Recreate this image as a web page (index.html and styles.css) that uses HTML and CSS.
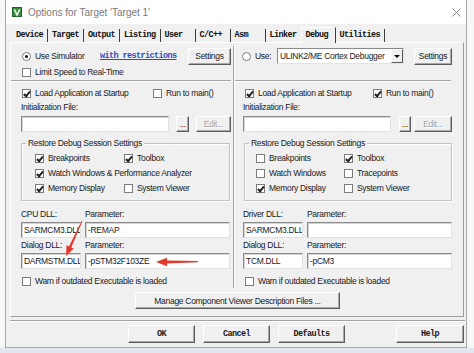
FILE: index.html
```html
<!DOCTYPE html>
<html>
<head>
<meta charset="utf-8">
<title>Options for Target 'Target 1'</title>
<link rel="stylesheet" href="styles.css">
</head>
<body>
<div class="window">
  <div class="titlebar">
    <svg class="appicon" viewBox="0 0 10 10"><rect x="0.5" y="0.5" width="9" height="9" fill="#3a8f3f" stroke="#1f6326"/><polyline points="2.3,2.4 5,8 7.7,2.4" fill="none" stroke="#e8f3e8" stroke-width="1.6"/></svg>
    <span class="title">Options for Target 'Target 1'</span>
    <svg class="close" viewBox="0 0 9 9"><path d="M0.5 0.5 L8.5 8.5 M8.5 0.5 L0.5 8.5" stroke="#8a8a8a" stroke-width="1" fill="none"/></svg>
  </div>

  <div class="tabs">
    <span class="tab">Device</span>
    <span class="tab">Target</span>
    <span class="tab">Output</span>
    <span class="tab">Listing</span>
    <span class="tab">User</span>
    <span class="tab">C/C++</span>
    <span class="tab">Asm</span>
    <span class="tab pre">Linker</span>
    <span class="tab sel">Debug</span>
    <span class="tab">Utilities</span>
  </div>

  <div class="panel">
    <div class="cols">
      <div class="col l">
        <div class="row top">
          <span class="chk w-sim"><span class="radio on"></span>Use Simulator</span>
          <span class="link">with restrictions</span>
          <span class="btn settings">Settings</span>
        </div>
        <div class="row"><span class="chk"><span class="box"></span>Limit Speed to Real-Time</span></div>
        <div class="sep"></div>
        <div class="row mt4">
          <span class="chk w-run"><span class="box on"></span>Load Application at Startup</span>
          <span class="chk"><span class="box"></span>Run to main()</span>
        </div>
        <div class="row">Initialization File:</div>
        <div class="fields init">
          <span class="inp initf"></span>
          <span class="btn dots">...</span>
          <span class="btn edit dis">Edit...</span>
        </div>
        <div class="grp">
          <div class="legend">Restore Debug Session Settings</div>
          <div class="grow first"><span class="chk gw"><span class="box on"></span>Breakpoints</span><span class="chk"><span class="box on"></span>Toolbox</span></div>
          <div class="grow"><span class="chk"><span class="box on"></span>Watch Windows &amp; Performance Analyzer</span></div>
          <div class="grow"><span class="chk gw"><span class="box on"></span>Memory Display</span><span class="chk"><span class="box"></span>System Viewer</span></div>
        </div>
        <div class="row lblrow"><span class="dlbl">CPU DLL:</span><span>Parameter:</span></div>
        <div class="fields dll1"><span class="inp dllf">SARMCM3.DLL</span><span class="inp parf">-REMAP</span></div>
        <div class="row lblrow2"><span class="dlbl">Dialog DLL:</span><span>Parameter:</span></div>
        <div class="fields dll2"><span class="inp dllf">DARMSTM.DLL</span><span class="inp parf">-pSTM32F103ZE</span></div>
        <div class="row warn"><span class="chk"><span class="box"></span>Warn if outdated Executable is loaded</span></div>
      </div>

      <div class="divider"></div>

      <div class="col r">
        <div class="row top">
          <span class="chk w-use"><span class="radio"></span>Use:</span>
          <span class="select"><span class="seltext">ULINK2/ME Cortex Debugger</span><span class="dd"><span class="tri"></span></span></span>
          <span class="btn settings">Settings</span>
        </div>
        <div class="row"></div>
        <div class="sep"></div>
        <div class="row mt4">
          <span class="chk w-run"><span class="box on"></span>Load Application at Startup</span>
          <span class="chk"><span class="box on"></span>Run to main()</span>
        </div>
        <div class="row">Initialization File:</div>
        <div class="fields init">
          <span class="inp initf"></span>
          <span class="btn dots">...</span>
          <span class="btn edit dis">Edit...</span>
        </div>
        <div class="grp">
          <div class="legend">Restore Debug Session Settings</div>
          <div class="grow first"><span class="chk gw"><span class="box"></span>Breakpoints</span><span class="chk"><span class="box on"></span>Toolbox</span></div>
          <div class="grow"><span class="chk gw"><span class="box"></span>Watch Windows</span><span class="chk"><span class="box"></span>Tracepoints</span></div>
          <div class="grow"><span class="chk gw"><span class="box on"></span>Memory Display</span><span class="chk"><span class="box"></span>System Viewer</span></div>
        </div>
        <div class="row lblrow"><span class="dlbl">Driver DLL:</span><span>Parameter:</span></div>
        <div class="fields dll1"><span class="inp dllf">SARMCM3.DLL</span><span class="inp parf"></span></div>
        <div class="row lblrow2"><span class="dlbl">Dialog DLL:</span><span>Parameter:</span></div>
        <div class="fields dll2"><span class="inp dllf">TCM.DLL</span><span class="inp parf">-pCM3</span></div>
        <div class="row warn"><span class="chk"><span class="box"></span>Warn if outdated Executable is loaded</span></div>
      </div>
    </div>
    <div class="managerow"><span class="btn manage">Manage Component Viewer Description Files ...</span></div>
  </div>

  <div class="footsep"></div>
  <div class="buttons">
    <span class="btn fbtn">OK</span>
    <span class="btn fbtn">Cancel</span>
    <span class="btn fbtn">Defaults</span>
    <span class="btn fbtn help">Help</span>
  </div>
</div>
<div class="below"></div>

<svg class="arrows" viewBox="0 0 474 353">
  <polygon points="82.4,221.2 71.3,247.4 73.8,248.6 66,256 66.5,245.2 69,246.4 81.6,220.8" fill="#e5382c"/>
  <polygon points="156,262 167,257.8 167,260.4 198,261 198,262.2 167,263.6 167,266.2" fill="#e5382c"/>
</svg>
</body>
</html>
```

FILE: styles.css
```css
* { box-sizing: border-box; }
html, body { margin: 0; padding: 0; }
body {
  width: 474px;
  height: 353px;
  overflow: hidden;
  position: relative;
  background: #f7f7f7;
  font-family: "Liberation Sans", Arial, sans-serif;
  font-size: 8.5px;
  letter-spacing: -0.3px;
  color: #1a1a1a;
}

.window {
  margin-left: 5px;
  width: 462px;
  background: #f0f0f0;
  border: 1px solid #a9a9a9;
  border-top: none;
  padding-bottom: 4px;
}

/* title bar */
.titlebar {
  height: 24px;
  background: #fff;
  display: flex;
  align-items: center;
  padding-left: 6px;
}
.appicon { width: 10px; height: 10px; flex: none; }
.title { margin-left: 6px; font-size: 10px; letter-spacing: 0; color: #7a7a7a; }
.close { margin-left: auto; margin-right: 5px; width: 9px; height: 9px; }

/* tabs */
.tabs {
  display: flex;
  align-items: flex-end;
  height: 18px;
  padding-left: 6px;
}
.tab {
  height: 13px;
  min-width: 35px;
  padding: 0 4px;
  border-right: 1px solid #3c3c3c;
  font: bold 8.5px/13px "Liberation Mono", monospace;
  letter-spacing: -0.6px;
  color: #111;
  white-space: nowrap;
}
.tab.pre { border-right-color: transparent; }
.tab.sel {
  height: 16px;
  line-height: 15px;
  background: #f0f0f0;
  border-left: 1px solid #fff;
  border-top: 1px solid #fff;
  margin-left: -1px;
  margin-bottom: -1px;
  position: relative;
  z-index: 1;
}

/* panel */
.panel {
  margin-left: 4px;
  width: 454px;
  border: 1px solid;
  border-color: #fff #9c9c9c #9c9c9c #fff;
  padding-bottom: 7px;
}
.cols {
  display: grid;
  grid-template-columns: 222px 2px 228px;
  height: 245px;
}
.divider {
  border-left: 1px solid #a3a3a3;
  border-right: 1px solid #fff;
  margin-top: 3px;
}
.col { display: flex; flex-direction: column; }
.col.l { padding: 0 2px 0 10px; }
.col.r { padding: 0 11px 0 8px; }

.row {
  display: flex;
  align-items: center;
  height: 14px;
  flex: none;
  white-space: nowrap;
}
.row.top { margin-top: 4px; height: 18px; }
.row.mt4 { margin-top: 4px; }
.sep {
  flex: none;
  margin-top: 1px;
  border-top: 1px solid #a3a3a3;
  border-bottom: 1px solid #fff;
}
.l .sep { margin-left: -10px; }
.r .sep { margin-left: -8px; margin-right: 1px; }

/* check / radio */
.chk { display: flex; align-items: center; white-space: nowrap; flex: none; }
.box, .radio {
  width: 9px;
  height: 9px;
  border: 1px solid #7c7c7c;
  background: #fff;
  margin: 0 4px 0 1px;
  position: relative;
  flex: none;
}
.r .row .box { margin-left: 2px; }
.radio { border-radius: 50%; }
.r .radio { margin-left: -1px; }
.radio.on::after {
  content: "";
  position: absolute;
  left: 2px;
  top: 2px;
  width: 3px;
  height: 3px;
  border-radius: 50%;
  background: #111;
}
.box.on::after {
  content: "";
  position: absolute;
  left: 2px;
  top: 0;
  width: 2px;
  height: 5px;
  border: solid #222;
  border-width: 0 2px 2px 0;
  transform: rotate(40deg);
}
.w-sim { width: 79px; }
.w-use { width: 34px; }
.l .w-run { width: 131px; }
.r .w-run { width: 128px; }

.link {
  font: bold 8.5px "Liberation Mono", monospace;
  letter-spacing: -0.6px;
  color: #2b4fcb;
  text-decoration: underline;
}

/* buttons */
.btn {
  display: flex;
  align-items: center;
  justify-content: center;
  flex: none;
  background: #f0f0f0;
  border: 1px solid;
  border-color: #fff #5c5c5c #5c5c5c #fff;
  box-shadow: inset -1px -1px 0 #a8a8a8;
  white-space: nowrap;
  color: #1a1a1a;
}
.settings { margin-left: auto; height: 17px; width: 43px; }
.r .settings { width: 38px; }
.dis { color: #a2a2a2; text-shadow: 1px 1px 0 #fff; }

/* inputs */
.inp {
  display: flex;
  align-items: center;
  background: #fff;
  border: 1px solid;
  border-color: #8a8a8a #e2e2e2 #e2e2e2 #8a8a8a;
  box-shadow: inset 1px 1px 0 #d4d4d4;
  padding: 0 1px 0 2px;
  overflow: hidden;
  white-space: nowrap;
  flex: none;
}

.fields { display: flex; height: 16px; flex: none; }
.fields.init { margin-top: 2px; }
.initf { width: 148px; }
.dots { width: 13px; margin-left: 7px; }
.edit { margin-left: auto; width: 35px; }
.r .dots { width: 12px; margin-left: 8px; }
.r .edit { width: 38px; }

/* select */
.select {
  display: flex;
  align-items: center;
  width: 127px;
  height: 16px;
  background: #fff;
  border: 1px solid;
  border-color: #8a8a8a #e2e2e2 #e2e2e2 #8a8a8a;
  padding-left: 2px;
  flex: none;
}
.seltext { flex: 1; white-space: nowrap; overflow: hidden; }
.dd {
  width: 12px;
  height: 14px;
  display: flex;
  align-items: center;
  justify-content: center;
  background: #f0f0f0;
  border: 1px solid;
  border-color: #fff #5c5c5c #5c5c5c #fff;
  flex: none;
}
.tri {
  width: 0;
  height: 0;
  border-left: 3px solid transparent;
  border-right: 3px solid transparent;
  border-top: 3px solid #111;
}

/* group box */
.grp {
  margin-top: 11px;
  height: 58px;
  flex: none;
  border: 1px solid #c2c2c2;
  box-shadow: inset 1px 1px 0 #fff, 1px 1px 0 #fff;
}
.l .grp { margin-right: 1px; }
.r .grp { margin-left: 1px; }
.legend {
  margin: -7px 0 0 4px;
  padding: 0 2px;
  width: max-content;
  height: 12px;
  line-height: 12px;
  background: #f0f0f0;
}
.grow {
  display: flex;
  align-items: center;
  height: 14px;
  margin-top: 1px;
  padding-left: 13px;
}
.r .grow { padding-left: 11px; }
.grow.first { margin-top: 2px; }
.grow .box { margin-left: 0; }
.gw { width: 89px; }
.r .gw { width: 88px; }

/* dll area */
.lblrow { margin-top: 6px; }
.lblrow2 { height: 13px; }
.dlbl { width: 64px; }
.fields.dll1 { margin-top: 1px; }
.fields.dll2 { margin-top: 2px; }
.dllf { width: 60px; }
.parf { flex: 1; margin-left: 4px; margin-right: 1px; }
.r .parf { margin-right: 0; }
.row.warn { margin-top: 5px; }

.managerow { display: flex; justify-content: center; margin-top: 4px; }
.manage { width: 205px; height: 17px; margin-left: 1px; }

/* footer */
.footsep {
  margin: 3px 1px 0 4px;
  border-top: 1px solid #a3a3a3;
  border-bottom: 1px solid #fff;
}
.buttons {
  display: flex;
  gap: 8px;
  margin-top: 3px;
  height: 18px;
  padding: 0 2px 0 122px;
}
.fbtn {
  width: 67px;
  font: bold 8.5px "Liberation Mono", monospace;
  letter-spacing: -0.6px;
}
.help { margin-left: auto; width: 68px; }

.below { height: 8px; background: #e3e7ed; }

.arrows {
  position: absolute;
  left: 0;
  top: 0;
  width: 474px;
  height: 353px;
  pointer-events: none;
}
```
